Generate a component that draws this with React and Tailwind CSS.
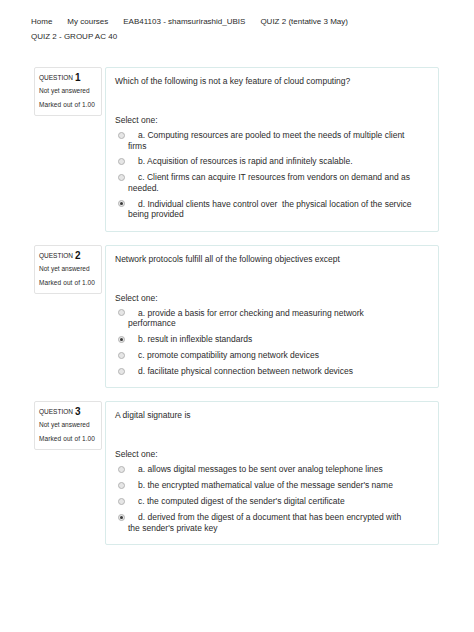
const questions = [
  {
    n: 1,
    text: 'Which of the following is not a key feature of cloud computing?',
    options: [
      { lines: ['a. Computing resources are pooled to meet the needs of multiple client', 'firms'] },
      { lines: ['b. Acquisition of resources is rapid and infinitely scalable.'] },
      { lines: ['c. Client firms can acquire IT resources from vendors on demand and as', 'needed.'] },
      { lines: ['d. Individual clients have control over  the physical location of the service', 'being provided'], checked: true },
    ],
  },
  {
    n: 2,
    text: 'Network protocols fulfill all of the following objectives except',
    options: [
      { lines: ['a. provide a basis for error checking and measuring network', 'performance'] },
      { lines: ['b. result in inflexible standards'], checked: true },
      { lines: ['c. promote compatibility among network devices'] },
      { lines: ['d. facilitate physical connection between network devices'] },
    ],
  },
  {
    n: 3,
    text: 'A digital signature is',
    options: [
      { lines: ['a. allows digital messages to be sent over analog telephone lines'] },
      { lines: ["b. the encrypted mathematical value of the message sender's name"] },
      { lines: ["c. the computed digest of the sender's digital certificate"] },
      { lines: ['d. derived from the digest of a document that has been encrypted with', "the sender's private key"], checked: true },
    ],
  },
];

function Radio({ checked }) {
  return (
    <span className="mt-[1.75px] ml-[3px] flex h-[7px] w-[7px] shrink-0 items-center justify-center rounded-full border border-[#b4b4b4] bg-[#e6e6e6]">
      {checked && <span className="h-[3px] w-[3px] rounded-full bg-[#3a3a3a]" />}
    </span>
  );
}

function Question({ q }) {
  return (
    <div className="flex items-start gap-[3px]">
      <div className="h-[49px] w-[68px] shrink-0 rounded-[2px] border border-[#e3e3e3] bg-white pl-[4px] pt-[3px]">
        <div className="flex h-[12px] items-end gap-[2px] leading-none">
          <span className="pb-[1.5px] text-[6.5px] text-[#222]">QUESTION</span>
          <span className="text-[10px] font-bold text-[#111]">{q.n}</span>
        </div>
        <div className="mt-[1px] text-[6.5px] leading-[14px] text-[#2b2b2b]">Not yet answered</div>
        <div className="text-[6.5px] leading-[14px] tracking-[0.1px] text-[#2b2b2b]">Marked out of 1.00</div>
      </div>
      <div className="flex-1 rounded-[2px] border border-[#d9ebea] bg-white pl-[9px] pt-[8px] pb-[11px] text-[8.5px] text-[#2b2b2b]">
        <p className="leading-[11px]">{q.text}</p>
        <p className="mt-[28px] leading-[10.5px]">Select one:</p>
        <div className="mt-[4.5px] flex flex-col gap-[5.4px]">
          {q.options.map((o, i) => (
            <div key={i} className="flex items-start">
              <Radio checked={o.checked} />
              <div className="ml-[3px] leading-[10.5px]">
                {o.lines.map((l, j) => (
                  <div key={j} className={j === 0 ? 'whitespace-pre pl-[10px]' : 'whitespace-pre'}>
                    {l}
                  </div>
                ))}
              </div>
            </div>
          ))}
        </div>
      </div>
    </div>
  );
}

export default function App() {
  return (
    <div className="min-h-[632px] w-[474px] bg-white" style={{ fontFamily: '"Liberation Sans", Arial, sans-serif' }}>
      <div className="pl-[31px] pt-[14px] text-[8px] leading-[15px] text-[#2b2b2b]">
        <div className="flex gap-x-[15px]">
          <span>Home</span>
          <span>My courses</span>
          <span>EAB41103 - shamsurirashid_UBIS</span>
          <span>QUIZ 2 (tentative 3 May)</span>
        </div>
        <div>QUIZ 2 - GROUP AC 40</div>
      </div>
      <div className="mt-[23px] flex flex-col gap-[13px] pl-[34px] pr-[35px]">
        {questions.map((q) => (
          <Question key={q.n} q={q} />
        ))}
      </div>
    </div>
  );
}
